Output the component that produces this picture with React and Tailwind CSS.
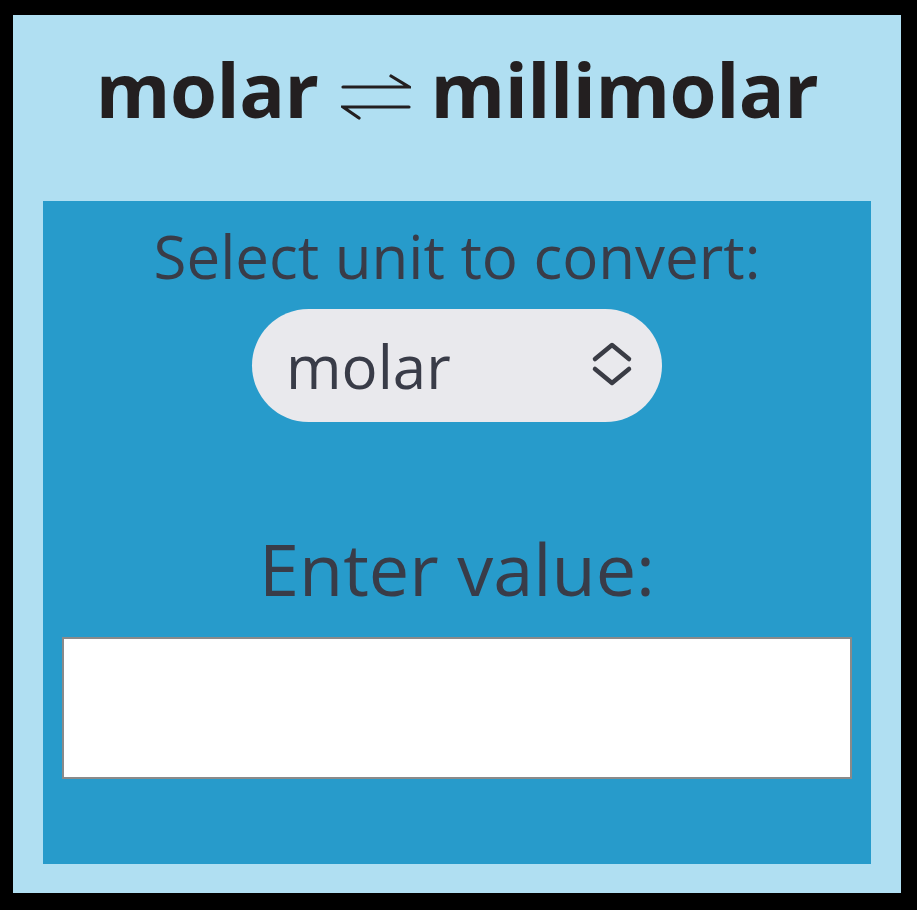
import { useState } from "react";

const ChevronUpDown = () => (
    <svg
        width="42"
        height="44"
        viewBox="0 0 42 44"
        fill="none"
        stroke="#3a3c45"
        strokeWidth="4.5"
        strokeLinecap="round"
        strokeLinejoin="round"
    >
        <path d="M4 17 L21 3 L38 17" />
        <path d="M4 27 L21 41 L38 27" />
    </svg>
);

// thin equilibrium harpoons, the font's ⇌ is too heavy
const Harpoons = () => (
    <svg
        width="70"
        height="52"
        viewBox="0 0 70 52"
        fill="none"
        stroke="#231f20"
        strokeWidth="3.2"
        strokeLinecap="round"
        className="inline-block ml-[22px] mr-[20px]"
    >
        <path d="M2 15 H68 L50 4" />
        <path d="M68 35 H2 L18 46" />
    </svg>
);

const App = () => {
    const [unit, setUnit] = useState("molar");
    const [value, setValue] = useState("");

    return (
        <div
            className="w-[917px] h-[910px] bg-black pt-[15px] pl-[13px] pr-[16px] pb-[17px]"
            style={{ fontFamily: '"Open Sans", "Noto Sans", sans-serif' }}
        >
            <div className="h-full bg-[#b0dff2] flex flex-col">
                <div className="h-[186px] flex justify-center pt-[26px]">
                    <h1 className="text-[76px] leading-[96px] font-bold text-[#231f20] tracking-[-0.5px] whitespace-nowrap">
                        molar<Harpoons />millimolar
                    </h1>
                </div>

                <div className="flex-1 mx-[30px] mb-[29px] bg-[#279bcb] flex flex-col items-center px-[19px]">
                    <label className="mt-[18px] text-[60px] leading-[74px] text-[#393c48] whitespace-nowrap">
                        Select unit to convert:
                    </label>

                    <div className="relative mt-[16px]">
                        <select
                            value={unit}
                            onChange={(e) => setUnit(e.target.value)}
                            className="appearance-none w-[410px] h-[113px] rounded-full bg-[#e9e9ed] pl-[34px] text-[60px] text-[#393c48] outline-none"
                        >
                            <option value="molar">molar</option>
                            <option value="millimolar">millimolar</option>
                        </select>
                        <div className="absolute right-[29px] top-[33px] pointer-events-none">
                            <ChevronUpDown />
                        </div>
                    </div>

                    <label className="mt-[101px] text-[72px] leading-[90px] text-[#393c48] whitespace-nowrap">
                        Enter value:
                    </label>

                    <input
                        value={value}
                        onChange={(e) => setValue(e.target.value)}
                        className="mt-[24px] w-full h-[142px] border-2 border-[#8a8a8a] bg-white text-[54px] px-3 outline-none"
                    />
                </div>
            </div>
        </div>
    );
};

export default App;
